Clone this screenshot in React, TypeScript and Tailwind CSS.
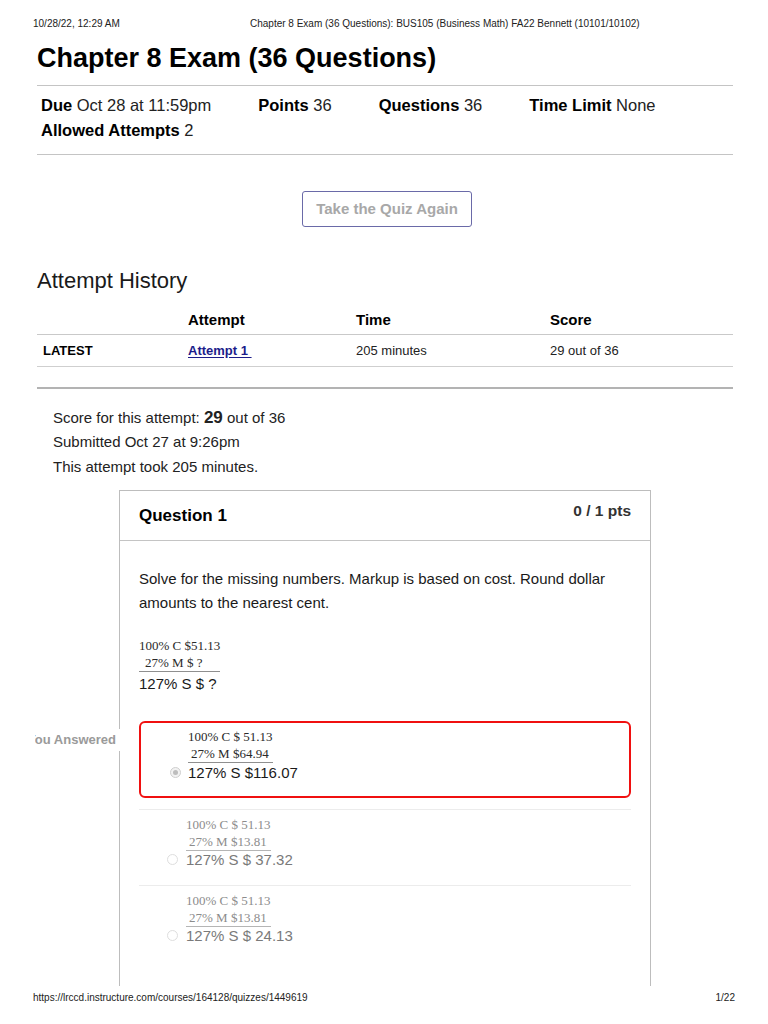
function Markup({
  a,
  b,
  c,
  muted,
  stem,
}: {
  a: string;
  b: string;
  c: string;
  muted?: boolean;
  stem?: boolean;
}) {
  return (
    <div className="flex flex-col">
      <div
        className={
          muted
            ? "self-start border-b border-[#b5b5b5] font-['Liberation_Serif','Times_New_Roman',serif] text-[13px] text-[#8c8c8c]"
            : "self-start border-b border-[#8f8f8f] font-['Liberation_Serif','Times_New_Roman',serif] text-[13px] text-[#2a2a2a]"
        }
      >
        <div className="h-[17px] leading-[17px] whitespace-pre">{a}</div>
        <div className={stem ? "h-[17px] leading-[17px] pl-[6px] whitespace-pre" : "h-[17px] leading-[17px] pl-[3px] whitespace-pre"}>{b}</div>
      </div>
      <div
        className={
          stem
            ? "h-[24px] leading-[24px] text-[15px] text-[#1a1a1a] whitespace-pre"
            : muted
            ? "h-[18px] leading-[18px] text-[15px] text-[#7a7a7a] whitespace-pre"
            : "h-[20px] leading-[20px] text-[15px] text-[#1a1a1a] whitespace-pre"
        }
      >
        {c}
      </div>
    </div>
  );
}

export default function App() {
  return (
    <div className="relative w-[768px] h-[1024px] overflow-hidden bg-white text-[#111] font-['Liberation_Sans',Arial,Helvetica,sans-serif]">
      {/* print header */}
      <div className="flex pt-[18px] pl-[33px] text-[10px] leading-[12px] text-[#222]">
        <span className="w-[217px]">10/28/22, 12:29 AM</span>
        <span>Chapter 8 Exam (36 Questions): BUS105 (Business Math) FA22 Bennett (10101/10102)</span>
      </div>

      <div className="ml-[35px] w-[700px] overflow-hidden">
        {/* title */}
        <h1 className="mt-[12px] pl-[2px] h-[32px] leading-[32px] text-[27px] font-bold text-black">
          Chapter 8 Exam (36 Questions)
        </h1>
        <div className="ml-[2px] mt-[11px] w-[696px] h-px bg-[#c4c4c4]" />

        {/* details */}
        <div className="ml-[6px] w-[690px] pt-[7px] pb-[11px] flex flex-wrap gap-x-[47px] text-[16.5px] leading-[25px] text-[#222]">
          <span>
            <b className="text-black">Due</b> Oct 28 at 11:59pm
          </span>
          <span>
            <b className="text-black">Points</b> 36
          </span>
          <span>
            <b className="text-black">Questions</b> 36
          </span>
          <span>
            <b className="text-black">Time Limit</b> None
          </span>
          <span>
            <b className="text-black">Allowed Attempts</b> 2
          </span>
        </div>
        <div className="ml-[2px] w-[696px] h-px bg-[#c4c4c4]" />

        {/* button */}
        <div className="flex justify-center mt-[36px] pl-[4px]">
          <div className="w-[170px] h-[36px] flex items-center justify-center rounded-[3px] border-[1.5px] border-[#6a6aa8] text-[15px] font-bold text-[#a8a8a8]">
            Take the Quiz Again
          </div>
        </div>

        {/* attempt history */}
        <h2 className="mt-[40px] pl-[2px] h-[28px] leading-[28px] text-[22px] text-[#1a1a1a]">Attempt History</h2>

        <div className="ml-[2px] w-[696px]">
          <div className="flex items-end h-[40px] pb-[5px] border-b border-[#c9c9c9] text-[15px] leading-[18px] font-bold text-black">
            <div className="w-[151px]" />
            <div className="w-[168px]">Attempt</div>
            <div className="w-[194px]">Time</div>
            <div>Score</div>
          </div>
          <div className="flex items-center h-[32px] border-b border-[#cfcfcf] text-[13px] text-[#222]">
            <div className="w-[151px] pl-[6px] font-bold text-black">LATEST</div>
            <div className="w-[168px]">
              <span className="font-bold text-[#1c1c8a] underline underline-offset-2 whitespace-pre">Attempt 1 </span>
            </div>
            <div className="w-[194px]">205 minutes</div>
            <div>29 out of 36</div>
          </div>
          <div className="mt-[20px] h-[1.5px] bg-[#b3b3b3]" />
        </div>

        {/* score summary */}
        <div className="ml-[18px] mt-[17px] text-[15px] leading-[24.5px] text-[#222]">
          <div>
            Score for this attempt: <b className="text-[17px] text-[#222]">29</b> out of 36
          </div>
          <div>Submitted Oct 27 at 9:26pm</div>
          <div>This attempt took 205 minutes.</div>
        </div>

        {/* question card */}
        <div className="relative ml-[84px] mt-[11px] w-[532px] h-[496px] border border-b-0 border-[#bdbdbd]">
          <div className="flex justify-between items-start h-[50px] pt-[10px] px-[19px] border-b border-[#c4c4c4]">
            <div className="mt-[3px] text-[17px] leading-[24px] font-bold text-black">Question 1</div>
            <div className="text-[15.5px] leading-[20px] font-bold text-[#333]">0 / 1 pts</div>
          </div>

          <div className="px-[19px] pt-[26px]">
            <p className="text-[15px] leading-[24px] text-[#1a1a1a]">
              Solve for the missing numbers. Markup is based on cost. Round dollar amounts to the nearest cent.
            </p>

            <div className="mt-[22px]">
              <Markup stem a="100% C $51.13" b="27% M $ ?" c="127% S $ ?" />
            </div>

            {/* answer 1 - selected */}
            <div className="relative mt-[25px] rounded-[6px] border-2 border-[#f01010] pt-[5px] pb-[13px] flex items-end">
              <div className="absolute top-[6px] right-[calc(100%+19px)] h-[22px] pr-[6px] bg-white flex items-center whitespace-nowrap text-[13px] font-bold text-[#9a9a9a]">
                You Answered
              </div>
              <div className="ml-[29px] mb-[5px] w-[11px] h-[11px] rounded-full border border-[#cfcfcf] bg-[#f2f2f2] flex items-center justify-center">
                <div className="w-[5px] h-[5px] rounded-full bg-[#bdbdbd]" />
              </div>
              <div className="ml-[7px]">
                <Markup a="100% C $ 51.13" b="27% M $64.94" c="127% S $116.07" />
              </div>
            </div>

            {/* answer 2 */}
            <div className="mt-[11px] border-t border-[#ececec] pt-[6px] pb-[16px] flex items-end">
              <div className="ml-[28px] mb-[4px] w-[11px] h-[11px] rounded-full border border-[#dedede] bg-white" />
              <div className="ml-[8px]">
                <Markup muted a="100% C $ 51.13" b="27% M $13.81" c="127% S $ 37.32" />
              </div>
            </div>

            {/* answer 3 */}
            <div className="border-t border-[#ececec] pt-[6px] pb-[16px] flex items-end">
              <div className="ml-[28px] mb-[4px] w-[11px] h-[11px] rounded-full border border-[#dedede] bg-white" />
              <div className="ml-[8px]">
                <Markup muted a="100% C $ 51.13" b="27% M $13.81" c="127% S $ 24.13" />
              </div>
            </div>
          </div>
        </div>
      </div>

      {/* print footer */}
      <div className="absolute left-0 right-0 top-[992px] flex justify-between pl-[33px] pr-[33px] text-[10px] leading-[12px] text-[#222]">
        <span>https://lrccd.instructure.com/courses/164128/quizzes/1449619</span>
        <span>1/22</span>
      </div>
    </div>
  );
}
